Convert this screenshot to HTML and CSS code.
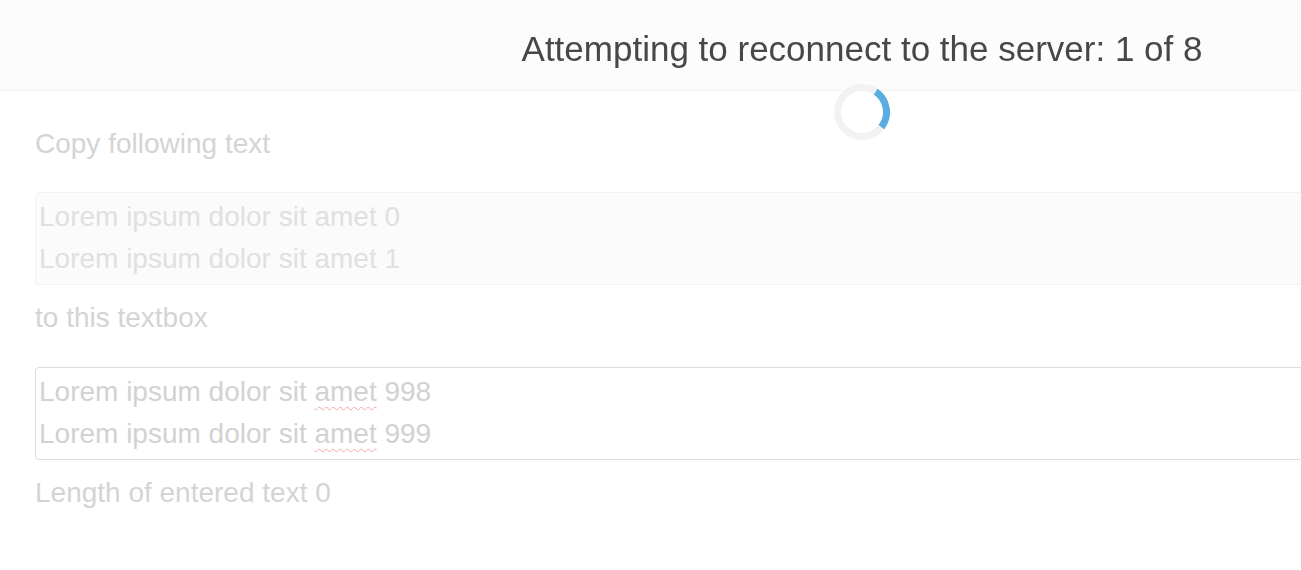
FILE: index.html
```html
<!DOCTYPE html>
<html lang="en">
<head>
<meta charset="utf-8">
<title>Copy text</title>
<link rel="stylesheet" href="styles.css">
</head>
<body>
<div class="page">
  <div class="top-row"></div>
  <main class="content">
    <p class="label first">Copy following text</p>
    <div class="box readonly">
      <div>Lorem ipsum dolor sit amet 0</div>
      <div>Lorem ipsum dolor sit amet 1</div>
    </div>
    <p class="label second">to this textbox</p>
    <div class="box editable">
      <div>Lorem ipsum dolor sit <span class="misspelled">amet</span> 998</div>
      <div>Lorem ipsum dolor sit <span class="misspelled">amet</span> 999</div>
    </div>
    <p class="label third">Length of entered text 0</p>
  </main>
</div>
<div class="reconnect-modal">
  <h5 class="reconnect-title">Attempting to reconnect to the server: 1 of 8</h5>
  <svg class="spinner" width="56" height="56" viewBox="0 0 56 56" aria-hidden="true">
    <circle cx="28" cy="28" r="24.5" fill="none" stroke="#f2f2f2" stroke-width="7"/>
    <circle cx="28" cy="28" r="24.5" fill="none" stroke="#5aade1" stroke-width="7" stroke-dasharray="40 200" transform="rotate(-56 28 28)"/>
  </svg>
</div>
</body>
</html>
```

FILE: styles.css
```css
html, body {
  margin: 0;
  padding: 0;
  background: #ffffff;
  overflow: hidden;
}

body {
  font-family: "Liberation Sans", Arial, sans-serif;
  font-size: 28px;
  line-height: 42px;
  color: #d4d4d4;
}

.page {
  width: 1724px;
}

.top-row {
  height: 90px;
  background: #fcfcfc;
  border-bottom: 1px solid #f4f4f4;
}

.content {
  padding: 32px 35px 0 35px;
  display: flex;
  flex-direction: column;
}

.label {
  margin: 0;
  height: 42px;
  color: #d4d4d4;
}

.box {
  box-sizing: border-box;
  height: 93px;
  padding: 3px 3px;
  border-radius: 4px;
  white-space: nowrap;
}

.readonly {
  margin-top: 27px;
  background: #fbfbfb;
  border: 1px solid #f2f2f2;
  color: #e0e0e0;
}

.second {
  margin-top: 12px;
}

.editable {
  margin-top: 28px;
  background: #ffffff;
  border: 1px solid #dcdcdc;
  color: #d2d2d2;
}

.misspelled {
  text-decoration-line: underline;
  text-decoration-style: wavy;
  text-decoration-color: #f2a8a8;
  text-decoration-thickness: 1px;
  text-underline-offset: 5px;
}

.third {
  margin-top: 12px;
}

.reconnect-modal {
  position: fixed;
  top: 0;
  left: 0;
  width: 1724px;
  height: 570px;
  z-index: 1050;
  text-align: center;
  display: flex;
  flex-direction: column;
  align-items: center;
}

.reconnect-title {
  margin: 29px 0 0 0;
  font-family: "Liberation Sans", Arial, sans-serif;
  font-size: 35px;
  line-height: 40px;
  font-weight: normal;
  color: #474747;
}

.spinner {
  display: block;
  margin-top: 15px;
}
```
